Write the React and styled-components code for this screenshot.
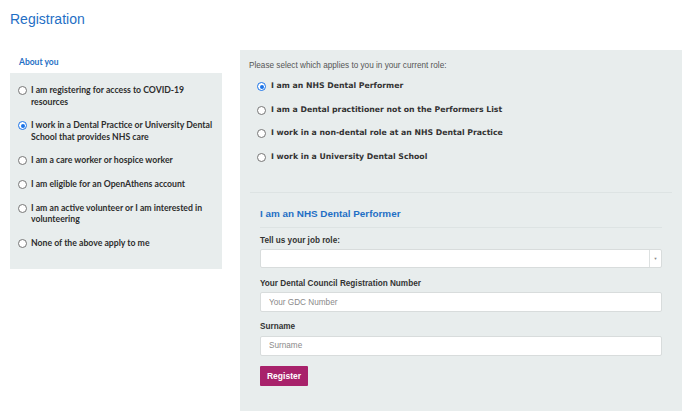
import styled, { createGlobalStyle } from 'styled-components'

const GlobalStyle = createGlobalStyle`
  html, body {
    margin: 0;
    padding: 0;
    background: #ffffff;
    font-family: "Liberation Sans", Arial, sans-serif;
  }
`

const Page = styled.div`
  padding: 9px 14px 0 10px;
  width: 696px;
  box-sizing: border-box;
  height: 411px;
  overflow: hidden;
`

const Title = styled.h1`
  margin: 0;
  font-size: 14px;
  font-weight: 400;
  color: #1f6fc5;
  line-height: 20px;
`

const Columns = styled.div`
  display: flex;
  align-items: flex-start;
  gap: 18px;
  margin-top: 21px;
`

const Sidebar = styled.div`
  width: 212px;
  flex: none;
`

const SideHeading = styled.div`
  height: 23px;
  padding-left: 9px;
  font-size: 8.5px;
  font-weight: 700;
  color: #1f6fc5;
  line-height: 24px;
  font-family: Lato, sans-serif;
`

const SidePanel = styled.div`
  background: #e8eded;
  padding: 11px 8px 21px 8px;
  display: flex;
  flex-direction: column;
  gap: 12.2px;
`

const Option = styled.label`
  display: flex;
  align-items: flex-start;
  gap: ${(p) => (p.$geo ? '4px' : '5px')};
  font-family: ${(p) => (p.$geo ? 'Lato, sans-serif' : '"DejaVu Sans", Verdana, sans-serif')};
  font-size: ${(p) => (p.$geo ? '8.7px' : '7.75px')};
  font-weight: 700;
  color: ${(p) => (p.$geo ? '#2e2e2e' : '#333333')};
  line-height: ${(p) => (p.$geo ? '11.5px' : '12px')};
`

const Radio = styled.span`
  flex: none;
  width: 7px;
  height: 7px;
  margin-top: 2px;
  border-radius: 50%;
  border: 1px solid ${(p) => (p.$checked ? '#1a73e8' : '#767676')};
  background: #ffffff;
  box-sizing: content-box;
  position: relative;
  &::after {
    content: '';
    display: ${(p) => (p.$checked ? 'block' : 'none')};
    position: absolute;
    left: 1.5px;
    top: 1.5px;
    width: 4px;
    height: 4px;
    border-radius: 50%;
    background: #1a73e8;
  }
`

const Main = styled.div`
  flex: 1;
  background: #e8eded;
  min-height: 370px;
  padding: 10px 10px 24px 9px;
`

const Intro = styled.p`
  margin: 0 0 8px;
  font-size: 8.2px;
  color: #555555;
  line-height: 12px;
`

const RoleList = styled.div`
  display: flex;
  flex-direction: column;
  gap: 11.5px;
  padding-left: 8px;
`

const Divider = styled.hr`
  margin: ${(p) => p.$margin};
  border: none;
  border-top: 1px solid #dde3e3;
`

const FormSection = styled.div`
  padding: 0 10px 0 11px;
`

const SectionTitle = styled.h2`
  margin: 14px 0 6px;
  font-size: 9.9px;
  font-weight: 700;
  color: #1f6fc5;
  line-height: 14px;
`

const Field = styled.div`
  display: flex;
  flex-direction: column;
  gap: 3.5px;
  margin-top: ${(p) => p.$top};
`

const FieldLabel = styled.label`
  font-size: 8.2px;
  font-weight: 700;
  color: #333333;
  line-height: 10px;
`

const Input = styled.input`
  height: ${(p) => p.$h};
  box-sizing: border-box;
  border: 1px solid #d8dcdc;
  border-radius: 2px;
  background: #ffffff;
  padding: 0 8px;
  font-family: "Liberation Sans", Arial, sans-serif;
  font-size: 8.2px;
  color: #333333;
  &::placeholder {
    color: #8a8a8a;
  }
`

const Select = styled.div`
  height: 19px;
  box-sizing: border-box;
  border: 1px solid #d8dcdc;
  border-radius: 2px;
  background: #ffffff;
  display: flex;
  justify-content: flex-end;
`

const SelectArrow = styled.span`
  width: 11px;
  border-left: 1px solid #dde1e1;
  display: flex;
  align-items: center;
  justify-content: center;
  color: #888888;
  font-size: 4px;
`

const Button = styled.button`
  margin-top: 10.5px;
  width: 48px;
  height: 20px;
  border: none;
  border-radius: 1px;
  background: #a8226b;
  color: #ffffff;
  font-family: "Liberation Sans", Arial, sans-serif;
  font-size: 8.5px;
  font-weight: 700;
  padding: 0;
`

const aboutOptions = [
  { label: 'I am registering for access to COVID-19 resources' },
  { label: 'I work in a Dental Practice or University Dental School that provides NHS care', checked: true },
  { label: 'I am a care worker or hospice worker' },
  { label: 'I am eligible for an OpenAthens account' },
  { label: 'I am an active volunteer or I am interested in volunteering' },
  { label: 'None of the above apply to me' },
]

const roleOptions = [
  { label: 'I am an NHS Dental Performer', checked: true },
  { label: 'I am a Dental practitioner not on the Performers List' },
  { label: 'I work in a non-dental role at an NHS Dental Practice' },
  { label: 'I work in a University Dental School' },
]

const App = () => {
  return (
    <Page>
      <GlobalStyle />
      <Title>Registration</Title>
      <Columns>
        <Sidebar>
          <SideHeading>About you</SideHeading>
          <SidePanel>
            {aboutOptions.map((o) => (
              <Option key={o.label} $geo>
                <Radio $checked={o.checked} />
                <span>{o.label}</span>
              </Option>
            ))}
          </SidePanel>
        </Sidebar>
        <Main>
          <Intro>Please select which applies to you in your current role:</Intro>
          <RoleList>
            {roleOptions.map((o) => (
              <Option key={o.label}>
                <Radio $checked={o.checked} />
                <span>{o.label}</span>
              </Option>
            ))}
          </RoleList>
          <Divider $margin="29px 0 0 1px" />
          <FormSection>
            <SectionTitle>I am an NHS Dental Performer</SectionTitle>
            <Divider $margin="0" />
            <Field $top="8px">
              <FieldLabel>Tell us your job role:</FieldLabel>
              <Select>
                <SelectArrow>▼</SelectArrow>
              </Select>
            </Field>
            <Field $top="10.5px">
              <FieldLabel>Your Dental Council Registration Number</FieldLabel>
              <Input $h="20px" placeholder="Your GDC Number" />
            </Field>
            <Field $top="10px">
              <FieldLabel>Surname</FieldLabel>
              <Input $h="20px" placeholder="Surname" />
            </Field>
            <Button>Register</Button>
          </FormSection>
        </Main>
      </Columns>
    </Page>
  )
}

export default App
